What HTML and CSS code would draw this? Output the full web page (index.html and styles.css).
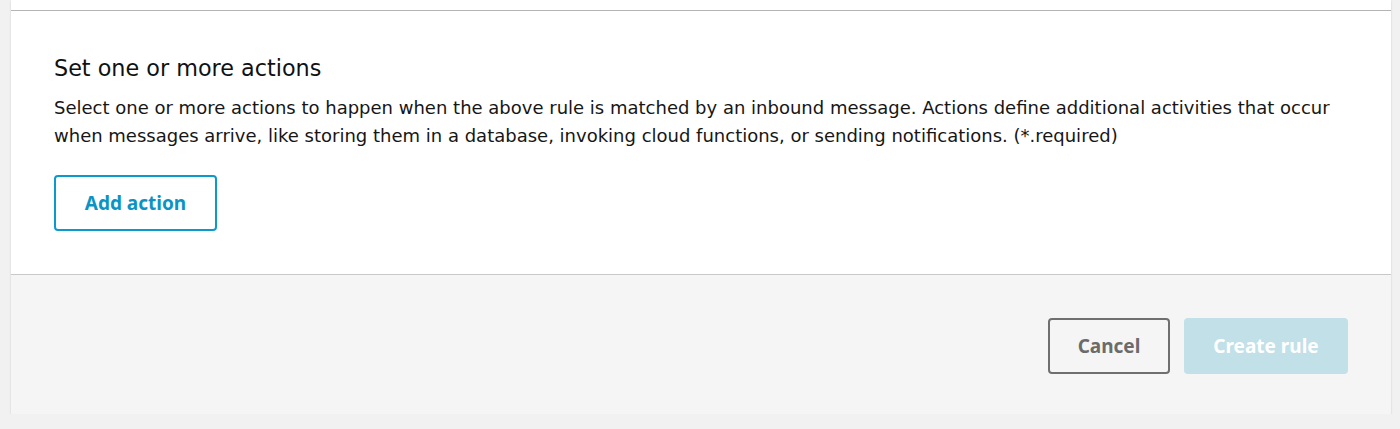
FILE: index.html
```html
<!DOCTYPE html>
<html>
<head>
<meta charset="utf-8">
<link rel="stylesheet" href="styles.css">
</head>
<body>
<div class="card">
  <div class="prev"></div>
  <section class="actions">
    <h2 class="title">Set one or more actions</h2>
    <p class="desc">Select one or more actions to happen when the above rule is matched by an inbound message. Actions define additional activities that occur when messages arrive, like storing them in a database, invoking cloud functions, or sending notifications. (*.required)</p>
    <button class="btn btn-add">Add action</button>
  </section>
  <footer class="footer">
    <button class="btn btn-cancel">Cancel</button>
    <button class="btn btn-create">Create rule</button>
  </footer>
</div>
</body>
</html>
```

FILE: styles.css
```css
html, body {
  margin: 0;
  padding: 0;
  background: #f1f1f1;
  font-family: "DejaVu Sans", "Noto Sans", sans-serif;
}
.card {
  margin-left: 11px;
  width: 1380px;
  background: #fff;
  box-shadow: 0 1px 2px rgba(0,0,0,0.15);
}
.prev {
  height: 10px;
  border-bottom: 1px solid #b4b4b4;
}
.actions {
  padding: 42px 43px 43px 43px;
  border-bottom: 1px solid #c8c8c8;
}
.title {
  margin: 0;
  font-size: 22.3px;
  font-weight: 400;
  color: #111;
  line-height: 30px;
}
.desc {
  margin: 11px 0 0 0;
  font-size: 18px;
  line-height: 28px;
  color: #161616;
}
.btn {
  font-family: "Noto Sans", "Open Sans", sans-serif;
  font-weight: 700;
  font-size: 19px;
  border-radius: 4px;
  height: 56px;
  padding: 0;
  cursor: pointer;
}
.btn-add {
  margin-top: 25px;
  width: 163px;
  background: #fff;
  color: #0c93c4;
  border: 2px solid #0c9acc;
}
.footer {
  background: #f5f5f5;
  display: flex;
  justify-content: flex-end;
  gap: 14px;
  padding: 43px 43px 40px 0;
}
.btn-cancel {
  width: 122px;
  background: transparent;
  color: #6b6b6b;
  border: 2px solid #6f6f6f;
}
.btn-create {
  width: 164px;
  background: #c1e0e7;
  color: #fff;
  border: none;
}
```
